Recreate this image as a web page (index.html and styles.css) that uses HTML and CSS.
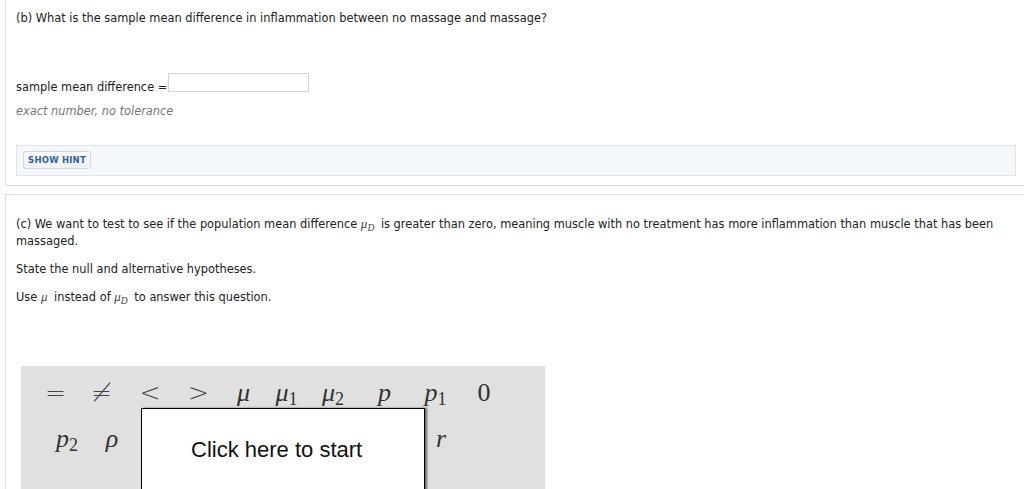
FILE: index.html
```html
<!DOCTYPE html>
<html>
<head>
<meta charset="utf-8">
<link rel="stylesheet" href="styles.css">
</head>
<body>
<div class="page">
  <section class="card card-b">
    <p class="text">(b) What is the sample mean difference in inflammation between no massage and massage?</p>
    <div class="answer-row">
      <span class="label">sample mean difference =</span>
      <span class="input"></span>
    </div>
    <p class="note">exact number, no tolerance</p>
    <div class="hint-box">
      <button class="hint-btn">SHOW HINT</button>
    </div>
  </section>

  <section class="card card-c">
    <p class="text">(c) We want to test to see if the population mean difference <span class="mi">μ<sub>D</sub></span> is greater than zero, meaning muscle with no treatment has more inflammation than muscle that has been massaged.</p>
    <p class="text">State the null and alternative hypotheses.</p>
    <p class="text">Use <span class="mi">μ</span> instead of <span class="mi">μ<sub>D</sub></span> to answer this question.</p>

    <div class="palette">
      <div class="prow prow-1">
        <span class="sym op">=</span>
        <span class="sym op">≠</span>
        <span class="sym op">&lt;</span>
        <span class="sym op">&gt;</span>
        <span class="sym it">μ</span>
        <span class="sym"><span class="it">μ</span><sub>1</sub></span>
        <span class="sym"><span class="it">μ</span><sub>2</sub></span>
        <span class="sym it">p</span>
        <span class="sym"><span class="it">p</span><sub>1</sub></span>
        <span class="sym">0</span>
      </div>
      <div class="prow prow-2">
        <span class="sym"><span class="it">p</span><sub>2</sub></span>
        <span class="sym it">ρ</span>
        <span class="sym"></span>
        <span class="sym it">r</span>
      </div>
      <div class="start">Click here to start</div>
    </div>
  </section>
</div>
</body>
</html>
```

FILE: styles.css
```css
html, body {
  margin: 0;
  padding: 0;
  background: #ffffff;
  overflow: hidden;
}

.page {
  width: 1024px;
  height: 489px;
  overflow: hidden;
  font-family: "DejaVu Sans", Verdana, sans-serif;
  font-size: 11.4px;
  color: #222;
}

.card {
  width: 1000px;
  margin-left: 5px;
  border: 1px solid #d8e0ea;
  background: #fff;
}

.card-b {
  margin-top: -1px;
  padding: 10px 10px 9px 10px;
}

.card-c {
  margin-top: 8px;
  padding: 21px 10px 0 10px;
  height: 400px;
}

.text {
  margin: 0 0 11px 0;
  line-height: 17px;
}

.card-b .text {
  margin: 0;
}

.mi {
  font-family: "Liberation Serif", "DejaVu Serif", serif;
  font-style: italic;
  font-size: 13px;
  line-height: 1;
  color: #444;
  padding-right: 3px;
}

.mi sub {
  font-size: 9.5px;
  vertical-align: -3px;
  line-height: 0;
}

.answer-row {
  display: flex;
  align-items: flex-end;
  height: 19px;
  margin-top: 46px;
}

.label {
  line-height: 17px;
  margin-bottom: -4px;
}

.input {
  display: block;
  width: 139px;
  height: 17px;
  border: 1px solid #d4d4d4;
  background: #fff;
  margin-left: 1px;
}

.note {
  margin: 11px 0 0 0;
  line-height: 17px;
  font-style: italic;
  color: #777;
}

.hint-box {
  margin-top: 25px;
  border: 1px solid #dde4ec;
  background: #f5f8fb;
  padding: 5px 6px 6px 6px;
}

.hint-btn {
  display: block;
  height: 18px;
  width: 68px;
  padding: 0;
  border: 1px solid #cdd6e0;
  border-radius: 3px;
  background: linear-gradient(#fbfcfd, #eef2f6);
  font-family: "DejaVu Sans", Verdana, sans-serif;
  font-weight: bold;
  font-size: 8.5px;
  color: #2f5f9e;
  letter-spacing: 0.2px;
}

.palette {
  position: relative;
  margin-top: 60px;
  margin-left: 5px;
  width: 524px;
  height: 140px;
  background: #e0e0e0;
  padding-top: 4px;
  box-sizing: border-box;
  font-family: "Liberation Serif", "DejaVu Serif", serif;
  font-size: 26px;
  color: #333;
}

.prow {
  display: grid;
  height: 46px;
  line-height: 46px;
  justify-items: center;
}

.prow-1 {
  padding-left: 12px;
  grid-template-columns: 45px 47px 50px 47px 43px 43px 50px 53px 49px 48px;
}

.prow-2 {
  padding-left: 24px;
  grid-template-columns: 44px 46px 285px 42px;
}

.sym {
  white-space: nowrap;
}

.op {
  font-family: "DejaVu Sans", "Liberation Serif", serif;
  font-size: 25px;
  font-weight: 200;
  color: #444;
}

.it {
  font-style: italic;
}

.sym sub {
  font-style: normal;
  font-size: 18px;
  vertical-align: -4px;
  line-height: 0;
}

.start {
  position: absolute;
  top: 42px;
  left: 120px;
  width: 284px;
  height: 120px;
  border: 1px solid #000;
  background: #fff;
  box-shadow: 2px 0 2px rgba(0, 0, 0, 0.55);
  font-family: "Liberation Sans", Arial, sans-serif;
  font-size: 22px;
  color: #111;
  padding: 28px 0 0 49px;
  line-height: 26px;
  box-sizing: border-box;
}
```
